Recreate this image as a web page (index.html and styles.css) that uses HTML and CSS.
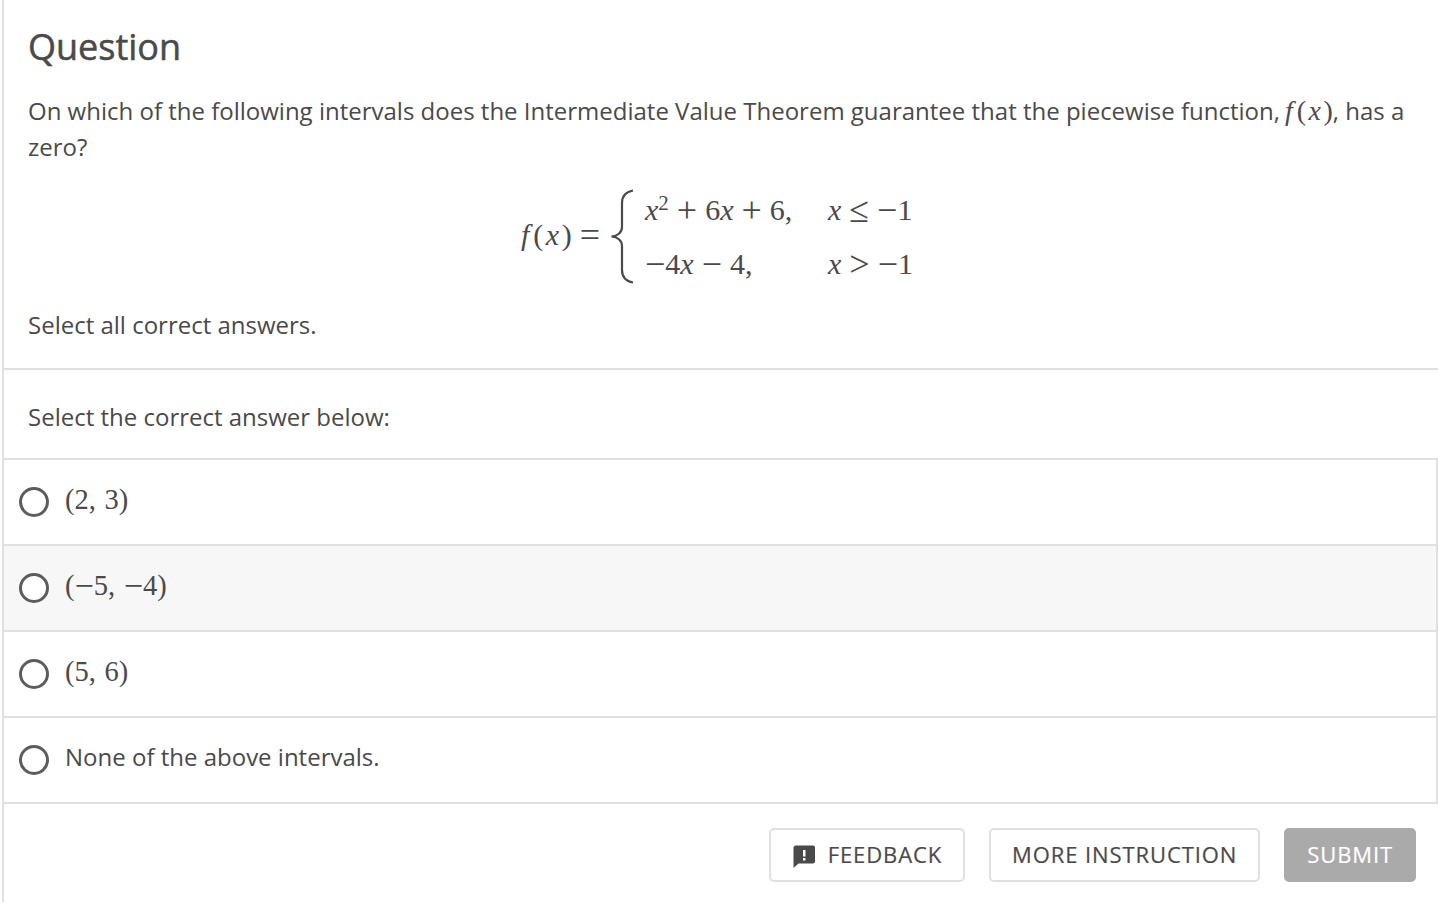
FILE: index.html
```html
<!DOCTYPE html>
<html lang="en">
<head>
<meta charset="utf-8">
<title>Question</title>
<link rel="stylesheet" href="styles.css">
</head>
<body>
<main class="panel">
  <section class="question">
    <h1>Question</h1>
    <p class="stem">On which of the following intervals does the Intermediate Value Theorem guarantee that the piecewise function,<span class="math stem-math"><i class="fn">f</i>(<i class="var">x</i>)</span>, has a zero?</p>
    <div class="equation math">
      <span class="lhs"><i class="fn">f</i>(<i class="var">x</i>) <span class="op">=</span></span>
      <svg class="brace" viewBox="0 0 24 95" width="24" height="95" aria-hidden="true"><path d="M23 1.500C15 3 12 7 12 14V38C12 43 8 47 1.500 47.500C8 48 12 52 12 57V81C12 88 15 92 23 93.500" fill="none" stroke="#4a4a4a" stroke-width="2.200"/></svg>
      <div class="cases">
        <span><i>x</i><sup>2</sup> <span class="op">+</span> 6<i>x</i> <span class="op">+</span> 6,</span><span><i>x</i> <span class="op">≤</span> <span class="op">−</span>1</span>
        <span><span class="op">−</span>4<i>x</i> <span class="op">−</span> 4,</span><span><i>x</i> <span class="op">&gt;</span> <span class="op">−</span>1</span>
      </div>
    </div>
    <p class="hint">Select all correct answers.</p>
  </section>
  <p class="prompt">Select the correct answer below:</p>
  <ul class="options">
    <li class="option"><span class="radio"></span><span class="math">(2, 3)</span></li>
    <li class="option hover"><span class="radio"></span><span class="math">(<span class="op">−</span>5, <span class="op">−</span>4)</span></li>
    <li class="option"><span class="radio"></span><span class="math">(5, 6)</span></li>
    <li class="option"><span class="radio"></span><span class="plain">None of the above intervals.</span></li>
  </ul>
  <footer class="actions">
    <button class="btn" type="button"><svg class="icon" viewBox="0 0 24 24" width="24" height="24" aria-hidden="true"><path fill="#4a4a4a" fill-rule="evenodd" d="M4 1.500h17a2 2 0 0 1 2 2v14a2 2 0 0 1-2 2H6.500L1.500 24V4a2.500 2.500 0 0 1 2.500-2.500ZM11 6v6.500h2.500V6ZM11 14v2.500h2.500V14Z"/></svg>FEEDBACK</button>
    <button class="btn" type="button">MORE INSTRUCTION</button>
    <button class="btn submit" type="button">SUBMIT</button>
  </footer>
</main>
</body>
</html>
```
FILE: styles.css
```css
* { box-sizing: border-box; }
html, body { margin: 0; height: 100%; background: #fff; }
body {
  padding-left: 2px;
  color: #4a4a4a;
  font-family: "Open Sans", sans-serif;
  font-size: 24px;
  overflow: hidden;
}
.panel { border-left: 2px solid #e0e0e0; height: 902px; }
.question { height: 370px; padding: 0 24px; border-bottom: 2px solid #e0e0e0; }
h1 {
  margin: 0;
  padding-top: 22px;
  font-size: 36px;
  line-height: 50px;
  font-weight: 400;
  -webkit-text-stroke: 0.5px #4a4a4a;
}
.stem { margin: 21px 0 0; font-size: 24px; line-height: 36px; }
.math { font-family: "Liberation Serif", serif; }
.stem-math { font-size: 28px; margin-left: 5px; }
.fn { margin-right: 4px; }
.var { margin: 0 2.500px; }
.op { font-size: 1.200em; line-height: 0; vertical-align: -2px; }
.equation {
  display: flex;
  align-items: center;
  margin: 22px 0 0 493px;
  font-size: 30px;
  height: 98px;
  word-spacing: 0.500px;
}
.lhs { width: 84px; white-space: nowrap; margin-top: -3px; }
.brace { margin-left: 5px; margin-right: 9px; flex: none; }
.cases {
  display: grid;
  grid-template-columns: 183px auto;
  row-gap: 14px;
  line-height: 40px;
  white-space: nowrap;
  margin: 2px 0 0 2px;
}
.cases sup { font-size: 21px; line-height: 0; vertical-align: 10px; }
.hint { margin: 22px 0 0; line-height: 36px; }
.prompt {
  margin: 0;
  height: 90px;
  padding: 29px 24px 0;
  line-height: 36px;
  border-bottom: 2px solid #e0e0e0;
}
.options { list-style: none; margin: 0; padding: 0; }
.option {
  display: flex;
  align-items: center;
  gap: 16px;
  height: 86px;
  padding: 0 0 0 15px;
  border-bottom: 2px solid #e0e0e0;
  border-right: 2px solid #e0e0e0;
  line-height: 36px;
}
.option .math { font-size: 28.500px; margin-top: -4px; word-spacing: 1.500px; }
.option .plain { margin-top: -6px; }
.option.hover { background: #f7f7f7; }
.radio {
  width: 30px;
  height: 30px;
  border: 3px solid #5c5c5c;
  border-radius: 50%;
  flex: none;
  background: #fff;
}
.actions {
  display: flex;
  justify-content: flex-end;
  gap: 24px;
  padding: 24px 22px 0 0;
}
.btn {
  display: flex;
  align-items: center;
  justify-content: center;
  height: 54px;
  padding: 0 21px 3px;
  border: 2px solid #e0e0e0;
  border-radius: 5px;
  background: #fff;
  color: #4a4a4a;
  font-family: "Open Sans", sans-serif;
  font-size: 22px;
  font-weight: 500;
  letter-spacing: 0.900px;
  -webkit-text-stroke: 0.200px currentColor;
}
.icon { margin-right: 12px; margin-top: 4px; }
.submit { background: #aaaaaa; border-color: #aaaaaa; color: #fff; }
```
